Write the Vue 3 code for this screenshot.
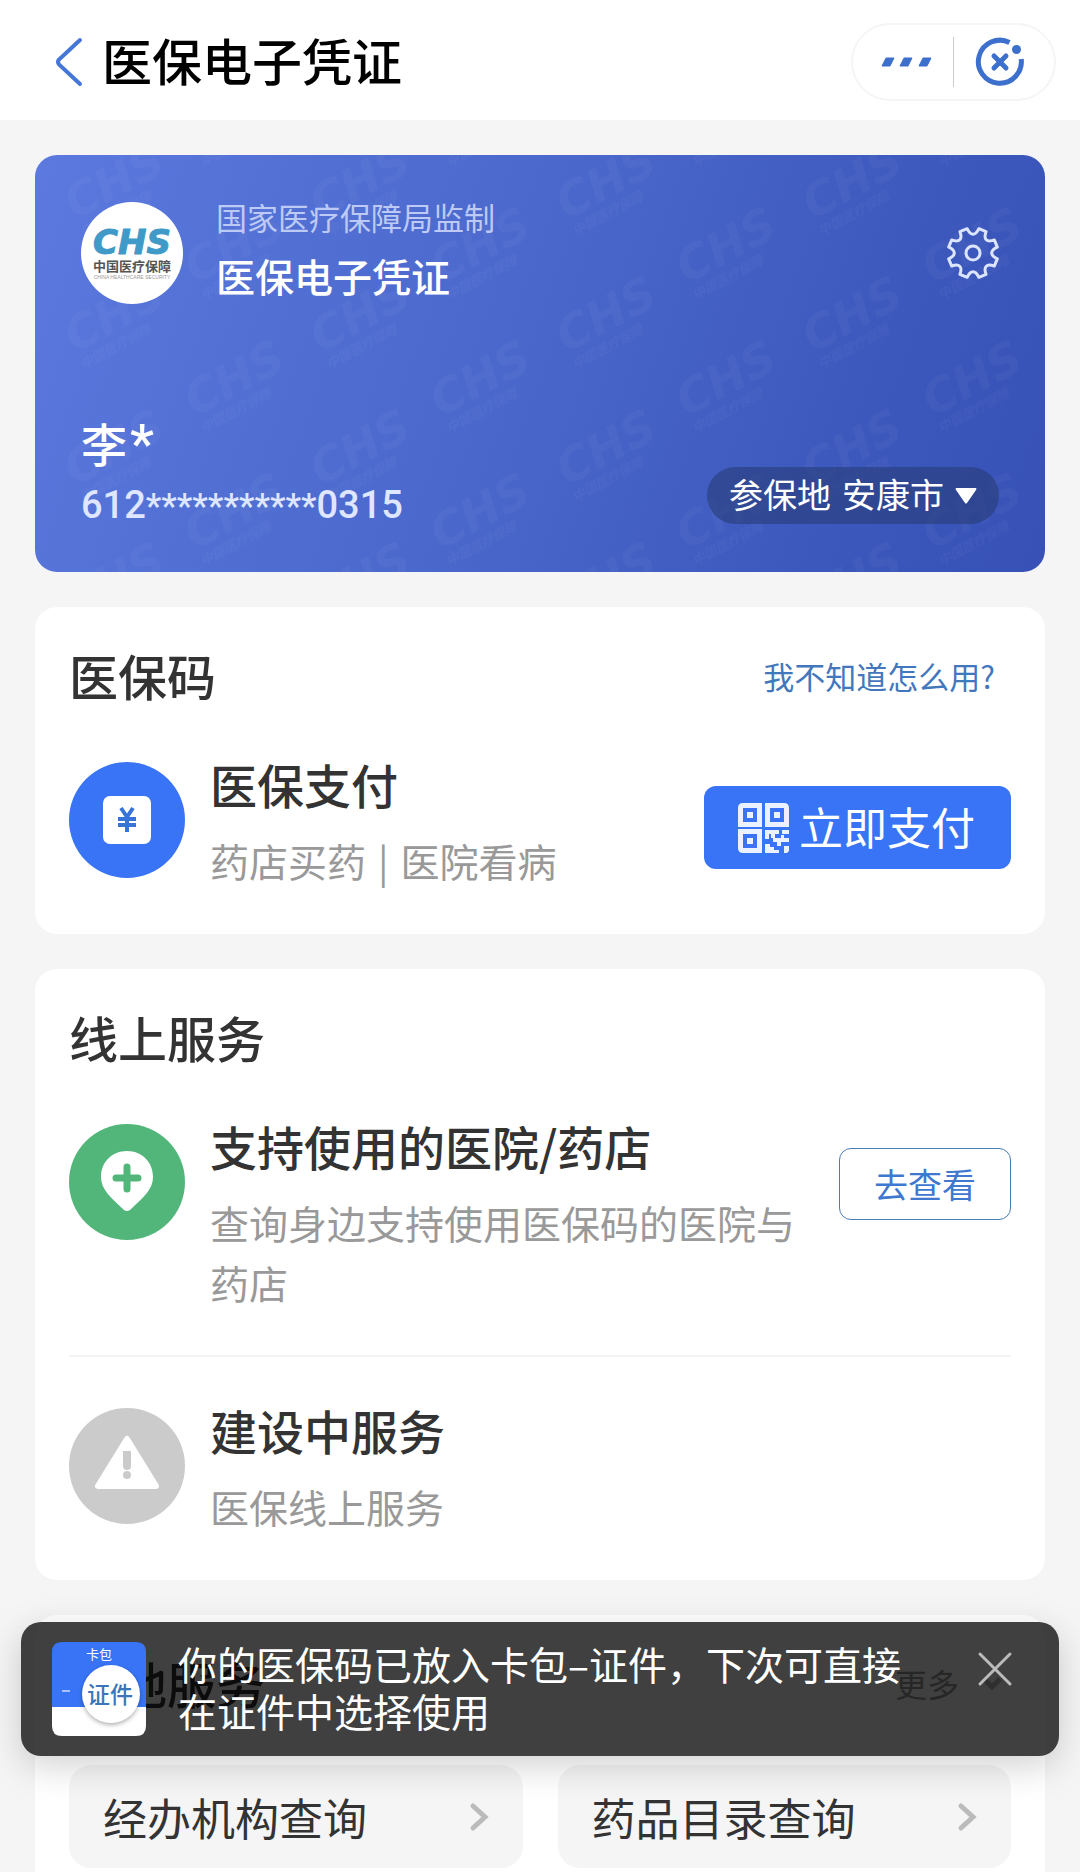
<script setup>
import { ref } from 'vue'

const toastOpen = ref(true)

const services = [
  {
    icon: 'pin',
    title: '支持使用的医院/药店',
    desc: '查询身边支持使用医保码的医院与药店',
    action: '去查看',
  },
  { icon: 'warn', title: '建设中服务', desc: '医保线上服务' },
]

const shortcuts = ['经办机构查询', '药品目录查询']

// Positions inside one watermark tile; marks that cross an edge are repeated on the other side.
const marks = [[40, 65], [40, 198], [160, -4], [160, 129], [-86, -4], [-86, 129]]

// Outline of the settings gear: eight teeth with rounded hollows between them.
function gearOutline(teeth, outer, hollow, half) {
  const at = (deg, r) => {
    const a = (deg * Math.PI) / 180
    return `${(r * Math.cos(a)).toFixed(2)} ${(r * Math.sin(a)).toFixed(2)}`
  }
  const step = 360 / teeth
  let d = ''
  for (let i = 0; i < teeth; i++) {
    const mid = i * step + step / 2
    d += `${i ? 'L' : 'M'}${at(mid - half, outer)}L${at(mid + half, outer)}`
    d += `C${at(mid + step / 2 - 8, hollow)} ${at(mid + step / 2 + 8, hollow)} ${at(mid + step - half, outer)}`
  }
  return d + 'Z'
}
const gear = gearOutline(8, 25, 17, 9)
</script>

<template>
  <div class="page">
    <header class="topbar">
      <button class="back" type="button" aria-label="返回">
        <svg width="30" height="52" viewBox="0 0 30 52"><path d="M26 4 5 23.500Q3 26 5 28.500L26 48" /></svg>
      </button>
      <h1>医保电子凭证</h1>
      <div class="capsule">
        <button type="button" aria-label="更多操作">
          <svg width="52" height="12" viewBox="0 0 52 12">
            <path d="M5 2h8l-4 8H1zM23 2h8l-4 8h-8zM42 2h8l-4 8h-8z" stroke="#3d6fcc" stroke-linejoin="round" />
          </svg>
        </button>
        <span class="split"></span>
        <button type="button" aria-label="关闭">
          <svg class="exit" width="52" height="52" viewBox="0 0 52 52">
            <path class="ring" d="M35.500 6.500A21.500 21.500 0 1 0 47.200 23" />
            <path class="cross" d="m20 20 12 12M32 20 20 32" />
            <circle cx="42.500" cy="13.500" r="4.500" />
          </svg>
        </button>
      </div>
    </header>

    <main>
      <section class="hero">
        <svg class="watermark" aria-hidden="true" width="100%" height="100%">
          <defs>
            <pattern id="mark" width="246" height="133" patternUnits="userSpaceOnUse">
              <g v-for="p in marks" :key="p.join()" :transform="`translate(${p[0]} ${p[1]}) rotate(-28)`">
                <text font-size="46">CHS</text>
                <text y="18" font-size="13">中国医疗保障</text>
              </g>
            </pattern>
          </defs>
          <rect width="100%" height="100%" fill="url(#mark)" />
        </svg>
        <div class="hero-top">
          <svg class="logo" width="102" height="102" viewBox="0 0 102 102">
            <circle cx="51" cy="51" r="51" fill="#fff" />
            <text class="chs" x="51" y="52" font-size="34">CHS</text>
            <text class="cn" x="51" y="69" font-size="13">中国医疗保障</text>
            <text class="en" x="51" y="77" font-size="5">CHINA HEALTHCARE SECURITY</text>
          </svg>
          <div class="issuer">
            <p>国家医疗保障局监制</p>
            <h2>医保电子凭证</h2>
          </div>
          <button class="settings" type="button" aria-label="设置">
            <svg width="52" height="54" viewBox="-26 -27 52 54">
              <path :d="gear" />
              <circle r="7" />
            </svg>
          </button>
        </div>
        <div class="hero-bottom">
          <div class="holder">
            <p class="name">李<span>*</span></p>
            <p class="number">612<span>***********</span>0315</p>
          </div>
          <button class="region" type="button">
            <span>参保地</span>
            <span>安康市</span>
            <svg width="22" height="16" viewBox="0 0 22 16"><path d="M1 0h20q1 1 0 2L12 15q-1 1-2 0L1 2q-1-1 0-2z" /></svg>
          </button>
        </div>
      </section>

      <section class="card">
        <div class="card-head">
          <h2>医保码</h2>
          <a class="help" href="#help">我不知道怎么用?</a>
        </div>
        <div class="service">
          <svg width="116" height="116" viewBox="0 0 116 116">
            <circle cx="58" cy="58" r="58" fill="#3874f5" />
            <rect x="34" y="34" width="48" height="48" rx="7" fill="#fff" />
            <path d="m52 46 6 9 6-9M58 55v15M49 57h18M49 63h18" fill="none" stroke="#3874d8" stroke-width="4" />
          </svg>
          <div class="text">
            <h3>医保支付</h3>
            <p>药店买药<span class="bar">|</span>医院看病</p>
          </div>
          <button class="pay" type="button">
            <svg width="51" height="50" viewBox="0 0 51 50" fill-rule="evenodd">
              <path d="M5 0h19v24H0V5q0-5 5-5zM5 5v14h14V5zM27 0h19q5 0 5 5v19H27zm5 5v14h14V5zM0 26h24v24H5q-5 0-5-5zm5 5v14h14V31z" />
              <path d="M9 9h6v6H9zM36 9h6v6h-6zM9 35h6v6H9z" />
              <path d="M27 27h14v4h-4v4h-4v-4h-2v5h-4zM44 27h7v4h-7zM37 35h6v-3h3v3h5v4h-8v4h-4v-4h-4v-4zM27 41h5v3h4v3h5v3H27zM46 43h5v5l-2 2h-3z" />
            </svg>
            <span>立即支付</span>
          </button>
        </div>
      </section>

      <section class="card">
        <div class="card-head">
          <h2>线上服务</h2>
        </div>
        <div v-for="s in services" :key="s.title" class="service">
          <svg v-if="s.icon === 'pin'" width="116" height="116" viewBox="0 0 116 116">
            <circle cx="58" cy="58" r="58" fill="#52b67a" />
            <path d="M58 27c15 0 26 11 26 26 0 12-9 20-23 33q-3 2-6 0C41 73 32 65 32 53c0-15 11-26 26-26z" fill="#fff" />
            <path d="M58 43v22M47 54h22" stroke="#52b67a" stroke-width="7" stroke-linecap="round" />
          </svg>
          <svg v-else width="116" height="116" viewBox="0 0 116 116">
            <circle cx="58" cy="58" r="58" fill="#cbcbcb" />
            <path d="M58 31 29 78h58z" fill="#fff" stroke="#fff" stroke-width="6" stroke-linejoin="round" />
            <path d="M54 43h8v15q0 4-4 4t-4-4z" fill="#cbcbcb" />
            <circle cx="58" cy="67" r="4" fill="#cbcbcb" />
          </svg>
          <div class="text">
            <h3>{{ s.title }}</h3>
            <p>{{ s.desc }}</p>
          </div>
          <button v-if="s.action" class="outline" type="button">{{ s.action }}</button>
        </div>
      </section>

      <section class="card last">
        <div class="card-head">
          <h2>本地服务</h2>
          <a class="more" href="#more">
            更多
            <svg width="22" height="14" viewBox="0 0 22 14"><path d="m3 3 8 8 8-8" /></svg>
          </a>
        </div>
        <div class="tiles">
          <a v-for="t in shortcuts" :key="t" class="tile" href="#query">
            {{ t }}
            <svg width="20" height="32" viewBox="0 0 20 32"><path d="m4 5 12 11L4 27" /></svg>
          </a>
        </div>
      </section>
    </main>

    <aside v-if="toastOpen" class="toast" role="status">
      <svg class="wallet" width="94" height="94" viewBox="0 0 94 94">
        <path d="M0 60h94v24q0 10-10 10H10Q0 94 0 84z" fill="#fff" />
        <path d="M0 65V10Q0 0 10 0h74q10 0 10 10v55z" fill="#3874f5" />
        <text x="47" y="17" font-size="13" fill="#fff">卡包</text>
        <path d="M10 49h8" stroke="#a9c2fa" stroke-width="2" />
        <circle class="badge" cx="59" cy="52" r="29" fill="#fff" />
        <text x="58" y="61" font-size="23" font-weight="500" fill="#3a76b8">证件</text>
      </svg>
      <p>你的医保码已放入卡包–证件，下次可直接<br />在证件中选择使用</p>
      <button class="dismiss" type="button" aria-label="关闭提示" @click="toastOpen = false">
        <svg width="36" height="36" viewBox="0 0 36 36"><path d="m3 3 30 30M33 3 3 33" /></svg>
      </button>
    </aside>
  </div>
</template>

<style>
body {
  background: #f5f5f5;
}
</style>

<style scoped>
.page {
  position: relative;
  min-height: 100vh;
  background: #f5f5f5;
  color: #333;
  font-family: "Noto Sans CJK SC", sans-serif;
  overflow: hidden;
}
h1, h2, h3, p {
  margin: 0;
  font-weight: 500;
}
button {
  padding: 0;
  border: 0;
  background: none;
  font: inherit;
  color: inherit;
  cursor: pointer;
}
a {
  text-decoration: none;
  color: inherit;
}
svg {
  display: block;
  flex: none;
}

.topbar {
  display: flex;
  align-items: center;
  height: 120px;
  padding: 3px 24px 0 54px;
  background: #fff;
  box-sizing: border-box;
}
.back {
  margin-right: 18px;
}
.back path {
  fill: none;
  stroke: #4577d8;
  stroke-width: 4;
  stroke-linecap: round;
}
h1 {
  padding-bottom: 5px;
  font-size: 50px;
  line-height: 60px;
  color: #000;
}
.capsule {
  display: flex;
  align-items: center;
  justify-content: space-between;
  height: 78px;
  margin-left: auto;
  padding: 0 28px;
  gap: 20px;
  border: 2px solid #f5f5f5;
  border-radius: 40px;
  box-sizing: border-box;
  fill: #3d6fcc;
}
.split {
  width: 1px;
  height: 50px;
  background: #ccc;
}
.exit .ring, .exit .cross {
  fill: none;
  stroke: #3d6fcc;
  stroke-width: 5;
}
.exit .cross {
  stroke-linecap: round;
}

main {
  display: flex;
  flex-direction: column;
  gap: 35px;
  padding: 35px 35px 0;
}

.hero {
  position: relative;
  display: flex;
  flex-direction: column;
  justify-content: space-between;
  min-height: 417px;
  padding: 40px 46px 48px;
  border-radius: 22px;
  background: linear-gradient(110deg, #5b79de 0%, #4a67cb 48%, #3d59bd 78%, #3751b6 100%);
  box-sizing: border-box;
  overflow: hidden;
}
.watermark {
  position: absolute;
  inset: 0;
}
.watermark text {
  font-family: "DejaVu Sans", "Noto Sans CJK SC", sans-serif;
  font-weight: 700;
  font-style: italic;
  fill: #fff;
  fill-opacity: 0.03;
}
.hero-top, .hero-bottom {
  position: relative;
  display: flex;
  align-items: center;
}
.logo text {
  text-anchor: middle;
}
.logo .chs {
  font-family: "DejaVu Sans", sans-serif;
  font-weight: 700;
  font-style: italic;
  fill: #3f9ac8;
  stroke: #3f9ac8;
  stroke-width: 1px;
}
.logo .cn {
  font-weight: 700;
  fill: #555;
}
.logo .en {
  font-family: "Liberation Sans", sans-serif;
  fill: #999;
}
.issuer {
  flex: 1;
  margin-left: 33px;
  color: #fff;
}
.issuer p, .issuer h2 {
  margin-bottom: 14px;
  line-height: 44px;
}
.issuer p {
  font-size: 31px;
  font-weight: 400;
  color: #bccaf5;
}
.issuer h2 {
  font-size: 39px;
}
.settings path, .settings circle {
  fill: none;
  stroke: #dce5ff;
  stroke-width: 3;
  stroke-linejoin: round;
}
.hero-bottom {
  align-items: flex-end;
  justify-content: space-between;
}
.name {
  margin-bottom: 16px;
  font-size: 46px;
  line-height: 60px;
  color: #fff;
}
.name span {
  margin-left: 3px;
  font-family: Roboto, sans-serif;
  font-size: 54px;
  line-height: 44px;
}
.number {
  font-family: Roboto, sans-serif;
  font-size: 38px;
  line-height: 34px;
  color: #dfe6ff;
}
.number span {
  font-size: 35px;
}
.region {
  display: flex;
  align-items: center;
  gap: 11px;
  height: 57px;
  padding: 0 22px;
  border-radius: 29px;
  background: rgba(40, 60, 120, 0.6);
  color: #fff;
  font-size: 34px;
  line-height: 54px;
}
.region span, .pay span {
  padding-bottom: 4px;
}
.region svg {
  fill: #fff;
}

.card {
  padding: 38px 34px 44px;
  border-radius: 22px;
  background: #fff;
}
.card-head {
  display: flex;
  align-items: center;
  justify-content: space-between;
  margin-bottom: 57px;
}
.card-head h2 {
  font-size: 49px;
  line-height: 60px;
}
.help {
  margin-right: 16px;
  font-size: 31px;
  color: #4377bd;
}
.service {
  display: flex;
  align-items: flex-start;
}
.service + .service {
  margin-top: 43px;
  padding-top: 51px;
  border-top: 2px solid #f3f3f3;
}
.text {
  flex: 1;
  margin: 0 25px;
}
.text h3 {
  font-size: 47px;
  line-height: 44px;
}
.text p {
  margin-top: 24px;
  font-size: 39px;
  font-weight: 400;
  line-height: 60px;
  color: #999;
}
.bar {
  padding: 0 12px;
}
.pay, .outline {
  flex: none;
  margin-top: 24px;
  border-radius: 12px;
}
.pay {
  display: flex;
  align-items: center;
  gap: 10px;
  height: 83px;
  padding: 0 36px 0 34px;
  background: #3874f5;
  color: #fff;
  font-size: 44px;
  line-height: 60px;
}
.pay svg {
  fill: #eaf2ff;
}
.outline {
  height: 72px;
  padding: 0 34px;
  border: 1px solid #4a7cb5;
  color: #4078d0;
  font-size: 34px;
  line-height: 60px;
}

.last {
  padding-bottom: 4px;
  border-radius: 22px 22px 0 0;
}
.last .card-head {
  margin-bottom: 52px;
}
.more {
  display: flex;
  align-items: center;
  gap: 22px;
  margin-right: 8px;
  font-size: 32px;
  color: #999;
}
.more path, .tile path {
  fill: none;
  stroke: #bbb;
  stroke-width: 5;
}
.tiles {
  display: grid;
  grid-template-columns: 1fr 1fr;
  gap: 35px;
}
.tile {
  display: flex;
  align-items: center;
  justify-content: space-between;
  height: 103px;
  padding: 0 34px;
  border-radius: 22px;
  background: #f5f5f5;
  font-size: 44px;
  box-sizing: border-box;
}
.tile path {
  stroke-linecap: round;
}

.toast {
  position: absolute;
  left: 21px;
  right: 21px;
  bottom: 116px;
  display: flex;
  align-items: flex-start;
  padding: 20px 46px 20px 31px;
  border-radius: 20px;
  background: rgba(0, 0, 0, 0.75);
  box-shadow: 0 10px 36px rgba(0, 0, 0, 0.18);
  color: #fff;
}
.wallet text {
  text-anchor: middle;
}
.badge {
  filter: drop-shadow(0 2px 2px rgba(0, 0, 0, 0.3));
}
.toast p {
  flex: 1;
  margin: -2px 0 0 32px;
  font-size: 39px;
  font-weight: 400;
  line-height: 47px;
}
.dismiss {
  margin-top: 9px;
}
.dismiss path {
  fill: none;
  stroke: #bbb;
  stroke-width: 3;
  stroke-linecap: round;
}
</style>
